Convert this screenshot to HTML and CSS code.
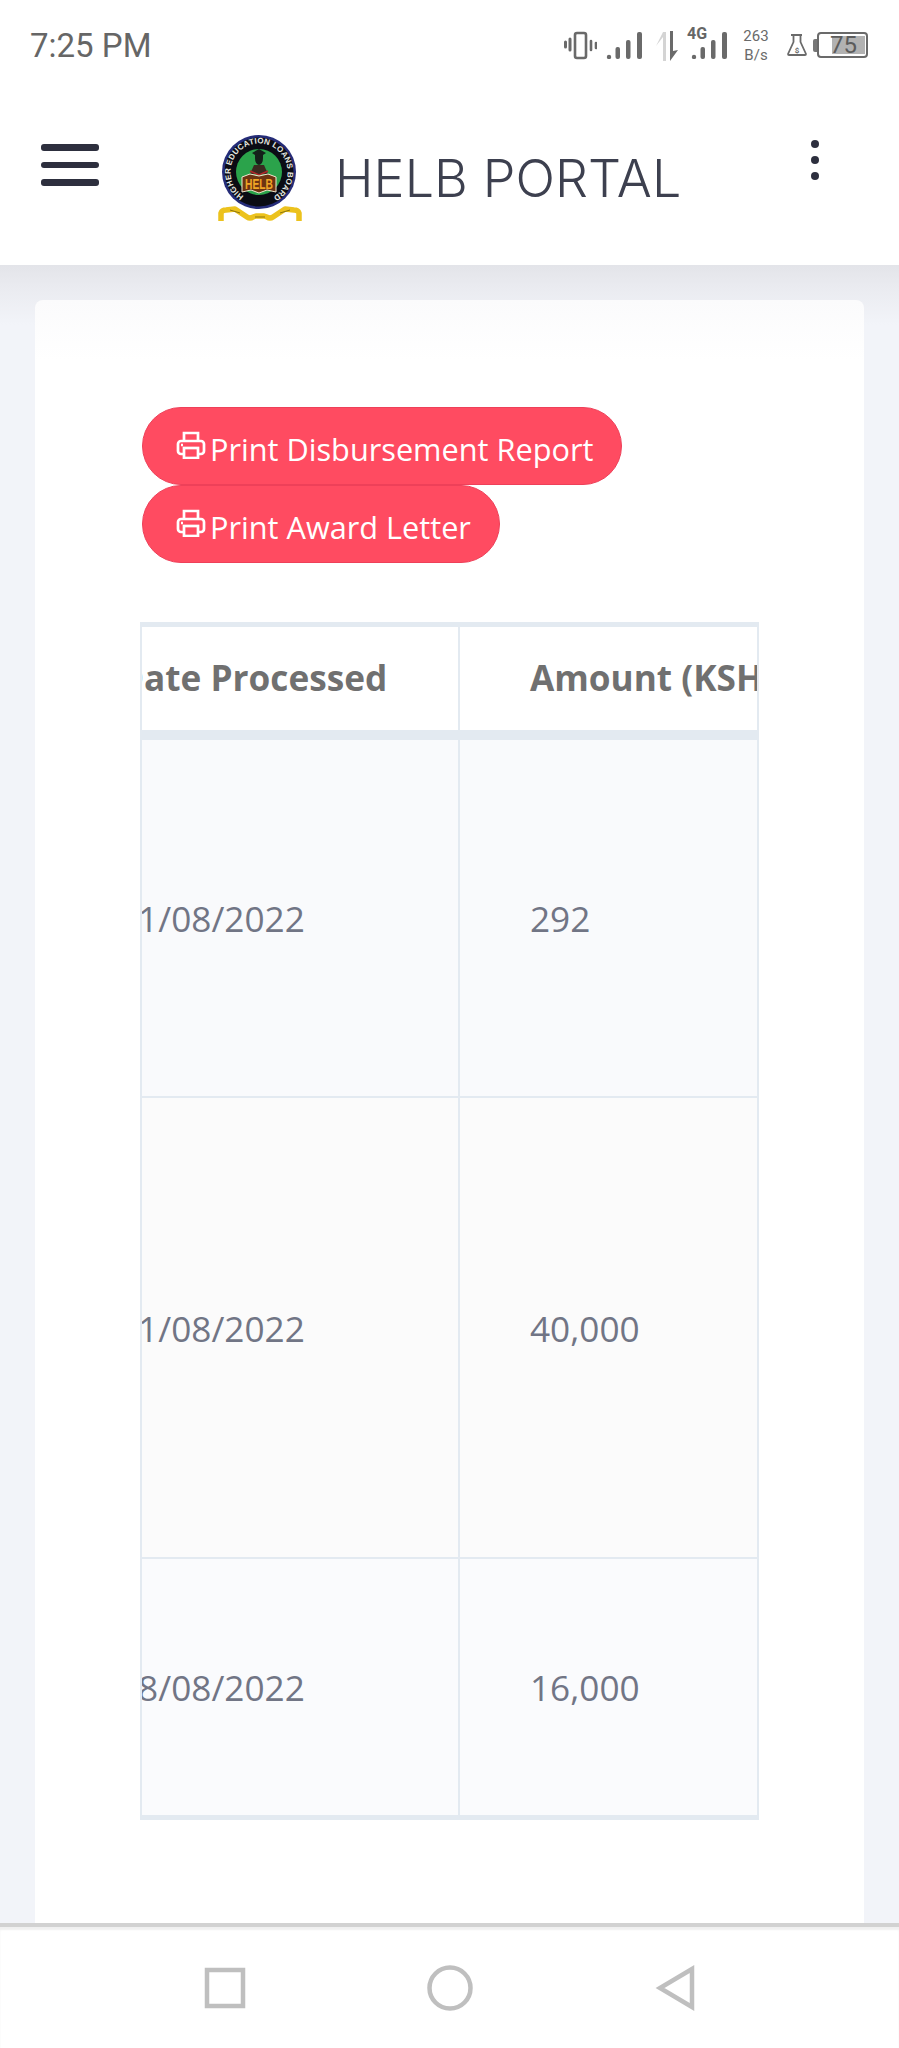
FILE: index.html
```html
<!DOCTYPE html>
<html lang="en">
<head>
<meta charset="utf-8">
<title>HELB Portal</title>
<link rel="stylesheet" href="styles.css">
</head>
<body>
<div class="phone">
  <div class="status">
    <span class="time">7:25 PM</span>
    <div class="status-icons">
      <svg class="i-vib" viewBox="0 0 33 29" fill="none" stroke="#6a6a6a"><path d="M1.500 11v5M6 8v11" stroke-width="3" stroke-linecap="round"/><rect x="11" y="2" width="11" height="25" rx="2" stroke-width="2.600"/><path d="M27 10v9M32 12v5" stroke-width="2.600" stroke-linecap="round"/></svg>
      <svg class="i-sig" viewBox="0 0 36 27" fill="#6a6a6a"><circle cx="3" cy="25" r="2.200"/><rect x="9.500" y="15" width="4.500" height="12" rx="2"/><rect x="20" y="8" width="4.500" height="19" rx="2"/><rect x="31" y="0" width="5" height="27" rx="2"/></svg>
      <svg class="i-arrows" viewBox="0 0 23 30"><path d="M8 30V6L1 15L8 1h3v29z" fill="#d4d4d4"/><path d="M15 0h3v20l5-1-8 11z" fill="#6a6a6a"/></svg>
      <div class="net">
        <span class="net-label">4G</span>
        <svg class="i-sig2" viewBox="0 0 36 27" fill="#6a6a6a"><circle cx="3" cy="25" r="2.200"/><rect x="9.500" y="15" width="4.500" height="12" rx="2"/><rect x="20" y="8" width="4.500" height="19" rx="2"/><rect x="31" y="0" width="5" height="27" rx="2"/></svg>
      </div>
      <div class="speed"><span>263</span><span>B/s</span></div>
      <svg class="i-flask" viewBox="0 0 20 22" fill="none" stroke="#6a6a6a" stroke-width="1.800"><path d="M4 1h11M6.500 1v7L1 20a1 1 0 0 0 1 1h16a1 1 0 0 0 1-1L13.500 8V1" stroke-linejoin="round"/><text class="flask-sign" x="10" y="18.500" text-anchor="middle" fill="#6a6a6a" stroke="none">$</text></svg>
      <div class="battery">
        <span class="batt-tip"></span>
        <div class="batt-body"><span class="batt-fill"></span><span class="batt-num">75</span></div>
      </div>
    </div>
  </div>

  <header class="appbar">
    <div class="burger"><span></span><span></span><span></span></div>
    <svg class="logo" viewBox="0 0 84 90">
      <defs><path id="arc" d="M41 65.500A28.500 28.500 0 1 1 41.100 65.500"/></defs>
      <circle cx="41" cy="37" r="37" fill="#252c78"/>
      <circle cx="41" cy="37" r="34.500" fill="#0b0c14"/>
      <circle cx="41" cy="37" r="23" fill="#2ba34b"/>
      <text class="logo-ring" fill="#e6e8e2"><textPath href="#arc" startOffset="9%">HIGHER EDUCATION LOANS BOARD</textPath></text>
      <path d="M34 18l7-4 7 4-3 2v3q0 6-4 7-4-1-4-7v-3z" fill="#14201a"/>
      <path d="M36 30h10l4 9H32z" fill="#3a2a20"/>
      <path d="M32 36l9 4 9-4" fill="none" stroke="#b3262a" stroke-width="1.500"/>
      <path d="M24 42l8-3 9 2 9-2 8 3v15l-9-2-8 3-8-3-9 2z" fill="#6d3412" stroke="#f2e7cf" stroke-width="1"/>
      <text class="logo-helb" x="41" y="54" text-anchor="middle" fill="#f0a626" textLength="28" lengthAdjust="spacingAndGlyphs">HELB</text>
      <path d="M3 86V78q1-3 5-3l9-1 12 8q3 2 6 0l3-1h8l3 1q3 2 6 0l12-8 9 1q4 0 5 3v8" fill="none" stroke="#ecc21d" stroke-width="5.500" stroke-linejoin="round"/>
      <path d="M12 75l10 3M37 82h10M62 78l10-3" stroke="#8a7510" stroke-width="1" fill="none"/>
    </svg>
    <h1 class="title">HELB PORTAL</h1>
    <div class="dots"><span></span><span></span><span></span></div>
  </header>

  <main class="content">
    <section class="card">
      <div class="actions">
        <a class="btn">
          <svg class="printer" viewBox="0 0 30 28" fill="none" stroke="#fff" stroke-width="2.700"><path d="M8 10V2h14v8"/><rect x="2" y="10" width="26" height="13" rx="3"/><rect x="8" y="17" width="14" height="10" fill="#ff4b61"/><path d="M5 14h2"/></svg>
          <span class="btn-label">Print Disbursement Report</span>
        </a>
        <a class="btn">
          <svg class="printer" viewBox="0 0 30 28" fill="none" stroke="#fff" stroke-width="2.700"><path d="M8 10V2h14v8"/><rect x="2" y="10" width="26" height="13" rx="3"/><rect x="8" y="17" width="14" height="10" fill="#ff4b61"/><path d="M5 14h2"/></svg>
          <span class="btn-label">Print Award Letter</span>
        </a>
      </div>
      <div class="table-clip">
        <table class="data">
          <thead>
            <tr><th class="col-date">Date Processed</th><th class="col-amount">Amount (KSH)</th></tr>
          </thead>
          <tbody>
            <tr class="row-a"><td>11/08/2022</td><td>292</td></tr>
            <tr class="row-b"><td>11/08/2022</td><td>40,000</td></tr>
            <tr class="row-c"><td>18/08/2022</td><td>16,000</td></tr>
          </tbody>
        </table>
      </div>
    </section>
  </main>

  <nav class="navbar">
    <svg class="nav-ic" viewBox="0 0 46 46" fill="none" stroke="#bfbfbf" stroke-width="4.500"><rect x="5" y="5" width="36" height="36"/></svg>
    <svg class="nav-ic" viewBox="0 0 46 46" fill="none" stroke="#bfbfbf" stroke-width="4.500"><circle cx="23" cy="23" r="20.500"/></svg>
    <svg class="nav-ic" viewBox="0 0 46 46" fill="none" stroke="#bfbfbf" stroke-width="4.500"><path d="M41 4v38L9 23z"/></svg>
  </nav>
</div>
</body>
</html>
```
FILE: styles.css
```css
* { box-sizing: border-box; }
html, body { margin: 0; padding: 0; background: #fff; }
.phone {
  width: 899px;
  height: 2048px;
  display: flex;
  flex-direction: column;
  overflow: hidden;
  font-family: "Open Sans", sans-serif;
}

/* status bar */
.status {
  height: 90px;
  flex: none;
  background: #fff;
  display: flex;
  align-items: flex-start;
  justify-content: space-between;
  padding: 0 31px 0 30px;
}
.time {
  font-family: Roboto, sans-serif;
  font-size: 33px;
  line-height: 38px;
  margin-top: 27px;
  color: #666;
}
.status-icons { display: flex; align-items: flex-start; padding-top: 27px; }
.i-vib { width: 33px; height: 29px; margin-top: 4px; }
.i-sig { width: 36px; height: 27px; margin: 5px 0 0 9px; }
.i-arrows { width: 23px; height: 30px; margin: 4px 0 0 13px; }
.net { width: 40px; height: 33px; margin-left: 9px; position: relative; }
.net-label {
  position: absolute;
  left: 0;
  top: -1px;
  font-family: Roboto, sans-serif;
  font-weight: 700;
  font-size: 16px;
  line-height: 15px;
  color: #666;
}
.i-sig2 { width: 36px; height: 27px; position: absolute; left: 4px; top: 5px; }
.speed {
  width: 30px;
  margin-left: 14px;
  display: flex;
  flex-direction: column;
  align-items: center;
  font-family: Roboto, sans-serif;
  font-size: 15px;
  line-height: 19px;
  color: #6a6a6a;
}
.i-flask { width: 20px; height: 22px; margin: 7px 0 0 16px; }
.flask-sign { font-family: Roboto, sans-serif; font-weight: 700; font-size: 8px; }
.battery { display: flex; align-items: center; margin: 5px 0 0 6px; }
.batt-tip { width: 4px; height: 13px; background: #777; border-radius: 2px 0 0 2px; }
.batt-body {
  width: 51px;
  height: 26px;
  border: 2px solid #6a6a6a;
  border-radius: 4px;
  position: relative;
}
.batt-fill { position: absolute; left: 13px; right: 1px; top: 2px; bottom: 2px; background: #b2b2b2; }
.batt-num {
  position: absolute;
  left: 11px;
  top: -2px;
  font-family: Roboto, sans-serif;
  font-size: 24px;
  line-height: 26px;
  color: #5c5c5c;
}

/* app bar */
.appbar {
  height: 175px;
  flex: none;
  background: #fff;
  display: flex;
  align-items: flex-start;
  padding-left: 41px;
  position: relative;
}
.burger { width: 58px; margin-top: 54px; display: flex; flex-direction: column; gap: 11px; }
.burger span { height: 6.500px; border-radius: 3px; background: #2d2f3e; }
.logo { width: 84px; height: 90px; margin: 45px 0 0 119px; }
.logo-ring { font-family: "Liberation Sans", sans-serif; font-weight: 700; font-size: 8px; letter-spacing: .2px; }
.logo-helb { font-family: "Liberation Sans", sans-serif; font-weight: 700; font-size: 15px; }
.title {
  margin: 56px 0 0 33px;
  font-family: Inter, sans-serif;
  font-weight: 300;
  font-size: 52px;
  line-height: 66px;
  letter-spacing: .1px;
  color: #3d404f;
  white-space: nowrap;
}
.dots { margin: 50px 80px 0 auto; display: flex; flex-direction: column; gap: 8px; }
.dots span { width: 8px; height: 8px; border-radius: 50%; background: #2d2f3e; }

/* content */
.content {
  flex: 1;
  min-height: 0;
  background: linear-gradient(#e3e4e9 0, #eaebf0 22px, #f2f4f9 60px);
  padding: 35px 35px 0;
}
.card {
  height: 100%;
  background: linear-gradient(#fbfbfc 0, #fff 60px);
  border-radius: 8px 8px 0 0;
  padding: 107px 105px 0 105px;
}
.actions { display: flex; flex-direction: column; align-items: flex-start; padding-left: 2px; }
.btn {
  display: inline-flex;
  align-items: center;
  gap: 4px;
  height: 78px;
  padding: 0 28px 0 33px;
  border: 1px solid #ee4059;
  border-radius: 39px;
  background: #ff4b61;
  color: #fff;
  font-size: 30.700px;
  line-height: 40px;
  white-space: nowrap;
}
.btn-label { padding-top: 5px; }
.printer { width: 30px; height: 28px; margin-top: -2px; flex: none; }

/* table */
.table-clip {
  margin-top: 59px;
  width: 619px;
  overflow: hidden;
  border: solid #e3eaf1;
  border-width: 5px 2px;
}
.data {
  margin-left: -94px;
  border-collapse: separate;
  border-spacing: 0;
  table-layout: fixed;
  width: 811px;
  font-size: 35.200px;
}
.col-date { width: 412px; border-right: 2px solid #e3eaf1; }
.col-amount { width: 399px; }
.data th {
  height: 113px;
  padding: 0 0 3px 70px;
  text-align: left;
  font-weight: 700;
  color: #707070;
  background: #fff;
  border-bottom: 10px solid #e3eaf1;
  white-space: nowrap;
}
.data td {
  padding: 0 0 0 70px;
  color: #717585;
  white-space: nowrap;
}
.data td:first-child { border-right: 2px solid #e3eaf1; }
.row-a td { height: 358px; background: #f9fafc; border-bottom: 2px solid #e3eaf1; }
.row-b td { height: 461px; background: #fbfbfb; border-bottom: 2px solid #e3eaf1; }
.row-c td { height: 256px; background: #fafbfd; }

/* nav */
.navbar {
  height: 125px;
  flex: none;
  background: #fff;
  border-top: 4px solid #d2d2d2;
  box-shadow: inset 0 3px 2px rgba(0, 0, 0, .06);
  position: relative;
  display: flex;
  justify-content: center;
  align-items: center;
  gap: 178.500px;
}
.nav-ic { width: 46px; height: 46px; }
```
